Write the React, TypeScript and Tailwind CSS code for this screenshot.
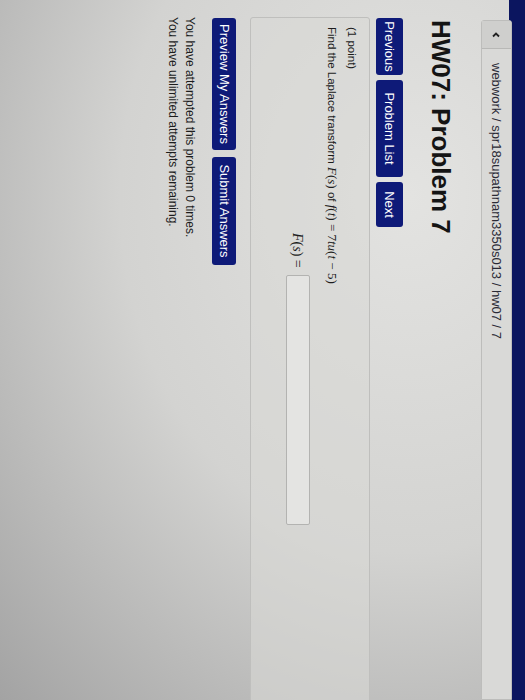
import React from "react";

// The photo shows the WeBWorK page turned a quarter clockwise, so the page is
// laid out at 700x525 and rotated into the 525x700 window.

const navBtns = [
  { label: "Previous", w: "w-[57px]" },
  { label: "Problem List", w: "w-[97px]" },
  { label: "Next", w: "w-[45px]" },
];

function I({ children }: { children: React.ReactNode }) {
  return <span className="italic">{children}</span>;
}

export default function App() {
  return (
    <div className="w-[525px] h-[700px] overflow-hidden bg-[#c2c2c0]">
      <div className="w-[700px] h-[525px] origin-top-left translate-x-[525px] rotate-90 overflow-hidden bg-radial-[at_28%_22%] from-[#e3e3e1] via-[#d3d3d1] to-[#a3a3a3] font-['Liberation_Sans',Arial,sans-serif] text-[#1c1c1c]">
        {/* top navy bar */}
        <div className="h-[16px] bg-[#0b155f]" />

        {/* breadcrumb */}
        <div className="ml-[20px] mt-[-3px] h-[31px] flex items-stretch border border-[#bdbdbb] bg-[#d9d9d7] rounded-l-[3px]">
          <div className="w-[28px] flex items-center justify-center border-r border-[#b8b8b6] bg-[#cfcfcd]">
            <svg width="10" height="10" viewBox="0 0 10 10" className="-rotate-90">
              <path d="M2 6.5 L5 3.5 L8 6.5" fill="none" stroke="#222" strokeWidth="1.8" />
            </svg>
          </div>
          <div className="flex items-center pl-[14px] text-[13px] text-[#2a2a35]">
            webwork / spr18supathnam3350s013 / hw07 / 7
          </div>
        </div>

        {/* heading */}
        <h1 className="ml-[20px] mt-[24px] text-[26px] leading-[32px] font-bold text-[#141414]">
          HW07: Problem 7
        </h1>

        {/* navigation buttons */}
        <div className="ml-[18px] mt-[22px] flex gap-[5px]">
          {navBtns.map((b) => (
            <div
              key={b.label}
              className={`${b.w} h-[27px] rounded-[3px] bg-[#0e1a78] text-white text-[13px] flex items-center justify-center`}
            >
              {b.label}
            </div>
          ))}
        </div>

        {/* problem box */}
        <div className="ml-[17px] mt-[6px] w-[730px] h-[120px] border border-[#bfbfbd] bg-[#d8d8d6]/60 rounded-[3px] pl-[9px] pt-[8px] text-[11.5px] leading-[19px]">
          <div>(1 point)</div>
          <div className="whitespace-nowrap">
            Find the Laplace transform{" "}
            <span className="font-['Liberation_Serif',serif] text-[13px]">
              <I>F</I>(<I>s</I>)
            </span>{" "}
            of{" "}
            <span className="font-['Liberation_Serif',serif] text-[13px]">
              <I>f</I>(<I>t</I>) = 7<I>tu</I>(<I>t</I> − 5)
            </span>
          </div>
          <div className="mt-[12px] pl-[206px] flex items-center gap-[7px]">
            <span className="font-['Liberation_Serif',serif] text-[14px] whitespace-nowrap">
              <I>F</I>(<I>s</I>) =
            </span>
            <div className="w-[250px] h-[24px] border border-[#b3b3b1] bg-[#e4e4e2] rounded-[2px]" />
          </div>
        </div>

        {/* answer buttons */}
        <div className="ml-[18px] mt-[14px] flex gap-[7px]">
          <div className="w-[132px] h-[24px] rounded-[3px] bg-[#0e1a78] text-white text-[13px] flex items-center justify-center">
            Preview My Answers
          </div>
          <div className="w-[108px] h-[24px] rounded-[3px] bg-[#0e1a78] text-white text-[13px] flex items-center justify-center">
            Submit Answers
          </div>
        </div>

        {/* attempts */}
        <div className="ml-[17px] mt-[14px] text-[12px] leading-[17px] text-[#1c1c1c]">
          <div>You have attempted this problem 0 times.</div>
          <div>You have unlimited attempts remaining.</div>
        </div>
      </div>
    </div>
  );
}
